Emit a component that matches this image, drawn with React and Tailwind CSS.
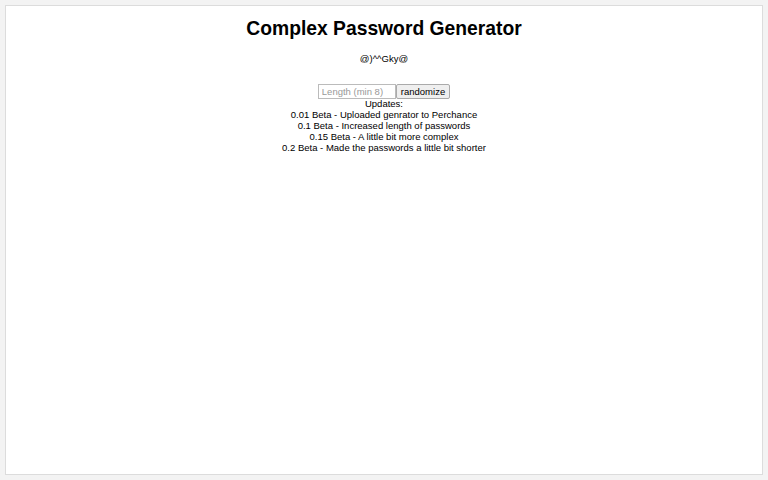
export default function App() {
    return (
        <div className="h-[480px] bg-[#f3f3f3] p-[5px]" style={{ fontFamily: "'Liberation Sans', Arial, sans-serif" }}>
            <div className="h-full bg-white border border-[#dcdcdc] flex flex-col items-center text-black">
                <h1 className="mt-[11px] text-[19.3px] font-bold leading-[23px]">Complex Password Generator</h1>
                <p className="mt-[13px] text-[9.5px] leading-[12px]">@)^^Gky@</p>
                <div className="mt-[19px] flex items-center">
                    <input placeholder="Length (min 8)"
                        className="w-[78px] h-[15px] border border-[#bbb] px-[3px] text-[9.5px] placeholder:text-[#999] outline-none" />
                    <button className="h-[15px] border border-[#aaa] bg-[#efefef] px-[4px] text-[9.5px] leading-[13px] rounded-[2px]">
                        randomize
                    </button>
                </div>
                <div className="text-[9.5px] leading-[11px] text-center -mt-[1px]">
                    <p>Updates:</p>
                    <p>0.01 Beta - Uploaded genrator to Perchance</p>
                    <p>0.1 Beta - Increased length of passwords</p>
                    <p>0.15 Beta - A little bit more complex</p>
                    <p>0.2 Beta - Made the passwords a little bit shorter</p>
                </div>
            </div>
        </div>
    );
}
